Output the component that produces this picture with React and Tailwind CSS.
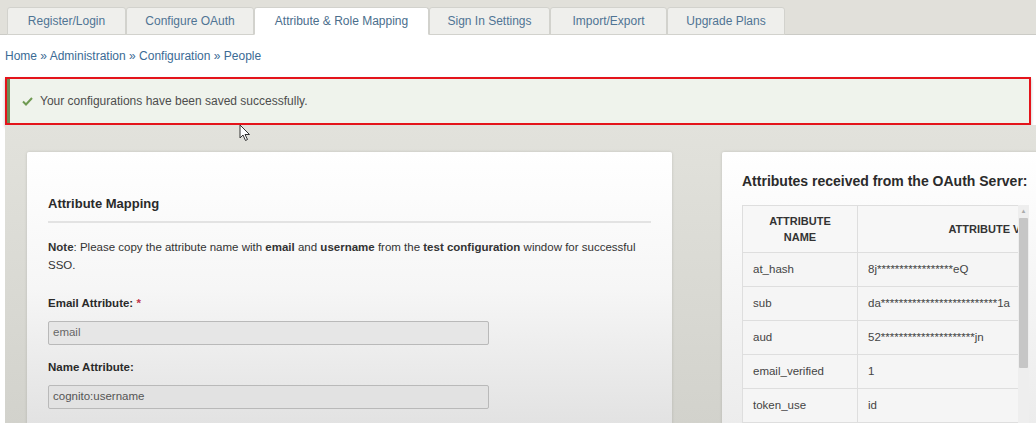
import React from "react";

const tabs = [
  { label: "Register/Login", w: "w-[119px]" },
  { label: "Configure OAuth", w: "w-[128px]" },
  { label: "Attribute & Role Mapping", w: "w-[175px]", active: true },
  { label: "Sign In Settings", w: "w-[121px]" },
  { label: "Import/Export", w: "w-[117px]" },
  { label: "Upgrade Plans", w: "w-[118px]" },
];

const rows = [
  { name: "at_hash", value: "8j*****************eQ" },
  { name: "sub", value: "da**************************1a" },
  { name: "aud", value: "52*********************jn" },
  { name: "email_verified", value: "1" },
  { name: "token_use", value: "id" },
];

const Check = () => (
  <svg width="11" height="9" viewBox="0 0 11 9" className="shrink-0">
    <polyline
      points="1,4.5 4,7.5 10,1"
      fill="none"
      stroke="#6f9a52"
      strokeWidth="2"
    />
  </svg>
);

const Cursor = () => (
  <svg
    width="12"
    height="18"
    viewBox="0 0 12 18"
    className="absolute left-[239px] top-[124px]"
  >
    <path
      d="M1 1 L1 14 L4 11 L6.5 16.5 L8.5 15.5 L6 10.5 L10.5 10.5 Z"
      fill="#fff"
      stroke="#333"
      strokeWidth="1"
    />
  </svg>
);

const App = () => {
  return (
    <div className="relative w-[1036px] h-[423px] overflow-hidden bg-white font-['Liberation_Sans',Arial,sans-serif]">
      {/* tab bar */}
      <div className="h-[35px] bg-[#e1e0da] flex items-end pl-[7px] border-b border-[#cbcbc6]">
        {tabs.map((t) => (
          <div
            key={t.label}
            className={`${t.w} h-[28px] -mb-px flex items-center justify-center text-[12px] border border-[#d2d2cd] rounded-t-[3px] ${
              t.active
                ? "bg-white border-b-white text-[#4a6e8c]"
                : "bg-[#efefec] text-[#4f7494]"
            }`}
          >
            {t.label}
          </div>
        ))}
      </div>

      {/* breadcrumb */}
      <div className="h-[42px] pl-[5px] pt-[12px] text-[12px] text-[#3b6b95]">
        Home » Administration » Configuration » People
      </div>

      {/* status message */}
      <div className="mx-[5px] h-[48px] border-2 border-[#e4141b] shadow-[0_2px_3px_rgba(0,0,0,0.25)]">
        <div className="h-full bg-[#eff3ec] border-l-[3px] border-[#6e8d58] flex items-center gap-[7px] pl-[12px] text-[12px] text-[#4d4d4d]">
          <Check />
          <span>Your configurations have been saved successfully.</span>
        </div>
      </div>

      {/* content area */}
      <div className="ml-[5px] h-[300px] bg-linear-to-b from-[#e2e2dc] to-[#d2d2cc] flex gap-[50px] pl-[22px] pt-[27px]">
        {/* left card */}
        <div className="w-[645px] shrink-0 bg-linear-to-b from-white via-[#f6f6f6] to-[#e2e2e2] shadow-[0_0_3px_rgba(0,0,0,0.15)] rounded-[2px] px-[21px] pt-[43px]">
          <h2 className="text-[13px] font-bold text-[#2a2a2a] leading-[18px]">
            Attribute Mapping
          </h2>
          <div className="mt-[8px] h-[2px] bg-[#e3e3e3]" />
          <p className="mt-[15px] text-[11.5px] leading-[18px] text-[#333]">
            <b>Note</b>: Please copy the attribute name with <b>email</b> and{" "}
            <b>username</b> from the <b>test configuration</b> window for
            successful SSO.
          </p>
          <div className="mt-[21px] text-[11.5px] font-bold text-[#2a2a2a] leading-[16px]">
            Email Attribute: <span className="text-[#c0334a]">*</span>
          </div>
          <div className="mt-[10px] w-[441px] h-[24px] border border-[#b9b9b9] bg-[#e6e6e6] rounded-[2px] flex items-center px-[4px] text-[11.5px] text-[#666]">
            email
          </div>
          <div className="mt-[14px] text-[11.5px] font-bold text-[#2a2a2a] leading-[16px]">
            Name Attribute:
          </div>
          <div className="mt-[10px] w-[441px] h-[24px] border border-[#b9b9b9] bg-[#e2e2e2] rounded-[2px] flex items-center px-[4px] text-[11.5px] text-[#555]">
            cognito:username
          </div>
        </div>

        {/* right card */}
        <div className="w-[340px] shrink-0 bg-linear-to-b from-white to-[#ececec] shadow-[0_0_3px_rgba(0,0,0,0.15)] rounded-[2px] pl-[20px] pt-[20px]">
          <h3 className="text-[14px] font-bold text-[#2b2b2b] leading-[18px] whitespace-nowrap">
            Attributes received from the OAuth Server:
          </h3>
          <div className="mt-[15px] flex">
            <div className="w-[276px] overflow-hidden">
              <table className="w-[399px] border-collapse text-[11.5px] text-[#444]">
                <thead>
                  <tr className="h-[47px] bg-[#f7f7f7]">
                    <th className="w-[115px] border border-[#dedede] text-[11px] font-bold text-[#333] leading-[16px]">
                      ATTRIBUTE
                      <br />
                      NAME
                    </th>
                    <th className="border border-[#dedede] text-[11px] font-bold text-[#333]">
                      ATTRIBUTE VALUE
                    </th>
                  </tr>
                </thead>
                <tbody>
                  {rows.map((r) => (
                    <tr key={r.name} className="h-[34px] bg-[#f5f5f5]">
                      <td className="border border-[#dedede] pl-[10px]">
                        {r.name}
                      </td>
                      <td className="border border-[#dedede] pl-[10px]">
                        {r.value}
                      </td>
                    </tr>
                  ))}
                </tbody>
              </table>
            </div>
            <div className="w-[11px] flex flex-col items-center bg-[#eeeeee]">
              <div className="h-[13px] flex items-center justify-center text-[6px] text-[#aaa]">
                ▲
              </div>
              <div className="w-[9px] h-[150px] bg-[#c6c6c6] rounded-[1px]" />
            </div>
          </div>
        </div>
      </div>

      <Cursor />
    </div>
  );
};

export default App;
